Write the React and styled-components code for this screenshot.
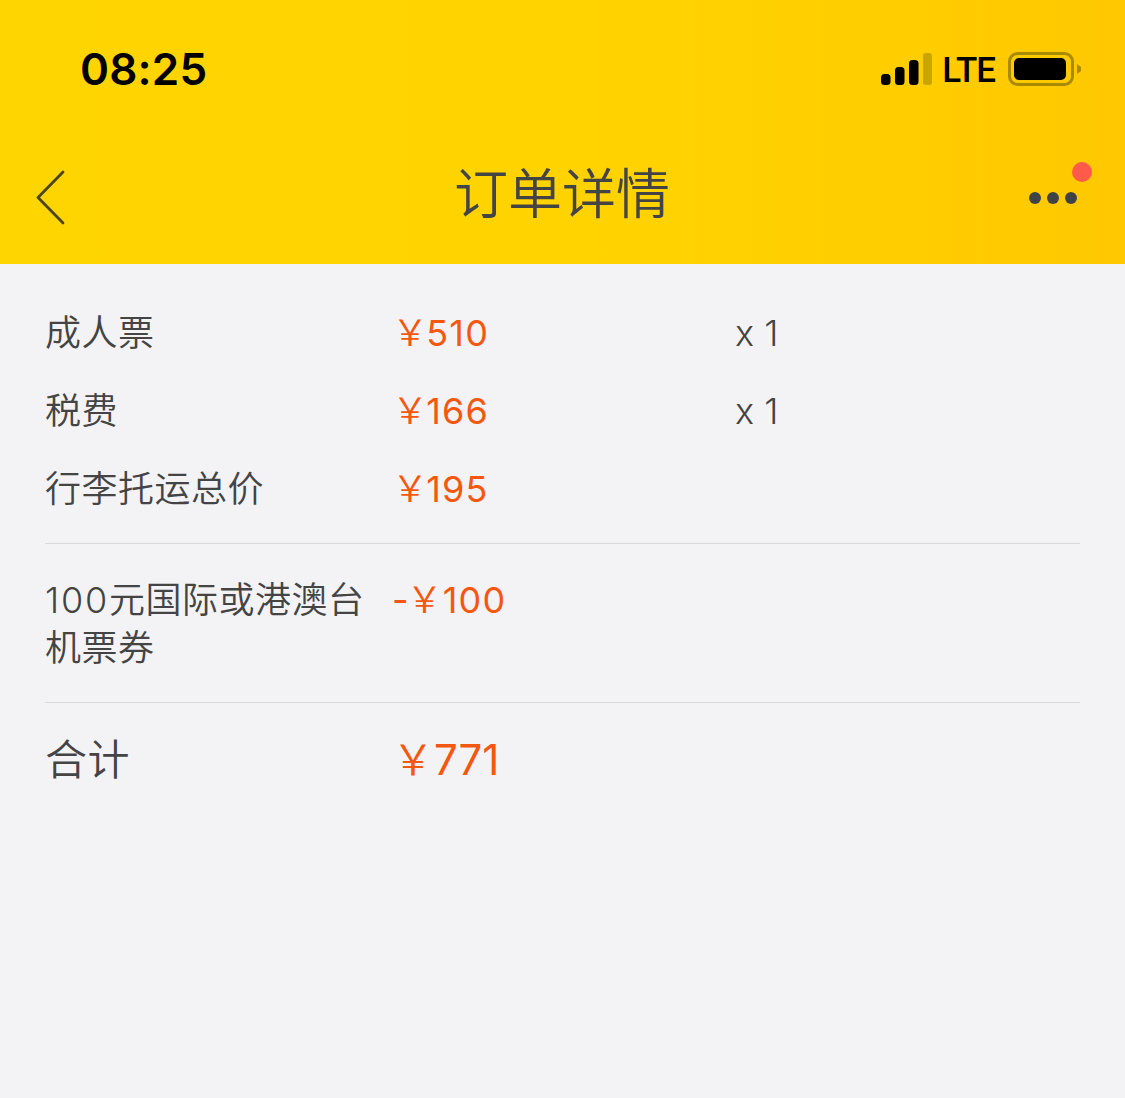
import React from "react";
import styled, { createGlobalStyle } from "styled-components";

const GlobalStyle = createGlobalStyle`
  html, body {
    margin: 0;
    padding: 0;
    background: #f3f3f5;
  }
  body {
    font-family: "Inter", "Noto Sans CJK SC", sans-serif;
  }
`;

const Page = styled.div`
  width: 1125px;
  height: 1098px;
  overflow: hidden;
  background: #f3f3f5;
`;

const Header = styled.header`
  height: 264px;
  background: linear-gradient(90deg, #ffd500 0%, #ffd200 60%, #ffc800 100%);
`;

const StatusBar = styled.div`
  height: 132px;
  padding: 6px 43px 0 80px;
  box-sizing: border-box;
  display: flex;
  align-items: center;
  justify-content: space-between;
`;

const Clock = styled.div`
  font-family: "Inter", sans-serif;
  font-size: 44px;
  font-weight: 600;
  letter-spacing: 0.2px;
  color: #000;
`;

const StatusIcons = styled.div`
  display: flex;
  align-items: center;
  gap: 11px;
`;

const Carrier = styled.span`
  font-family: "Roboto", sans-serif;
  font-size: 35px;
  font-weight: 500;
  line-height: 36px;
  letter-spacing: -1px;
  margin: 3px 2px 0 -1px;
  color: #000;
`;

const NavBar = styled.div`
  height: 132px;
  padding: 0 48px 0 36px;
  box-sizing: border-box;
  display: grid;
  grid-template-columns: 1fr auto 1fr;
  align-items: center;
`;

const Title = styled.h1`
  margin: 0 0 14px 11px;
  font-family: "Noto Sans CJK SC", sans-serif;
  font-size: 54px;
  font-weight: 350;
  line-height: 60px;
  color: #444;
`;

const MoreButton = styled.div`
  position: relative;
  justify-self: end;
  display: flex;
  gap: 6px;
`;

const Dot = styled.span`
  width: 12px;
  height: 12px;
  border-radius: 50%;
  background: #3f4347;
`;

const Badge = styled.span`
  position: absolute;
  top: -30px;
  right: -15px;
  width: 20px;
  height: 20px;
  border-radius: 50%;
  background: #ff5a4a;
`;

const Content = styled.main`
  padding: 30px 45px 0;
`;

const Section = styled.section`
  border-bottom: ${(p) => (p.$last ? "none" : "1px solid #d9d9db")};
  padding-bottom: ${(p) => p.$bottom || 0}px;
  padding-top: ${(p) => p.$top || 0}px;
`;

const Row = styled.div`
  display: grid;
  grid-template-columns: 347px 343px 1fr;
  align-items: start;
  font-family: "Inter", "Noto Sans CJK SC", sans-serif;
  font-size: ${(p) => (p.$large ? 42 : 36)}px;
  line-height: ${(p) => p.$height || 78}px;
  letter-spacing: 0.5px;
  color: #444;
`;

const Label = styled.div`
  font-weight: 350;
`;

const Digits = styled.span`
  letter-spacing: 1.8px;
`;

const Price = styled.div`
  color: #f4570f;
  font-weight: 400;
  white-space: nowrap;
  letter-spacing: ${(p) => (p.$large ? 0 : 1.2)}px;
`;

const Minus = styled.span`
  letter-spacing: -2px;
`;

const Yen = styled.span`
  font-family: "Noto Sans CJK SC", sans-serif;
  font-weight: 350;
  line-height: 0;
  margin-right: ${(p) => p.$gap}px;
`;

const Qty = styled.div`
  font-weight: 350;
  letter-spacing: 0;
`;

const items = [
  { label: "成人票", price: "510", qty: "x 1" },
  { label: "税费", price: "166", qty: "x 1" },
  { label: "行李托运总价", price: "195" },
];

export default function App() {
  return (
    <Page>
      <GlobalStyle />
      <Header>
        <StatusBar>
          <Clock>08:25</Clock>
          <StatusIcons>
            <svg width="51" height="32" viewBox="0 0 51 32">
              <rect x="0" y="21" width="9.5" height="11" rx="3.5" fill="#000" />
              <rect x="14" y="14" width="9.5" height="18" rx="3.5" fill="#000" />
              <rect x="28" y="7" width="9.5" height="25" rx="3.5" fill="#000" />
              <rect x="42" y="0" width="9" height="32" rx="3" fill="#c9a500" />
            </svg>
            <Carrier>LTE</Carrier>
            <svg width="74" height="34" viewBox="0 0 74 34">
              <rect x="1.5" y="1.5" width="63" height="31" rx="8" fill="none" stroke="#a98a00" strokeWidth="3" />
              <rect x="6" y="6" width="52" height="22" rx="5" fill="#000" />
              <path d="M69 12 L73 15 V19 L69 22 Z" fill="#a98a00" />
            </svg>
          </StatusIcons>
        </StatusBar>
        <NavBar>
          <svg width="30" height="58" viewBox="0 0 30 58">
            <path d="M27 3 L2 28.5 L27 54" fill="none" stroke="#4a4618" strokeWidth="2.8" strokeLinecap="round" strokeLinejoin="round" />
          </svg>
          <Title>订单详情</Title>
          <MoreButton>
            <Dot />
            <Dot />
            <Dot />
            <Badge />
          </MoreButton>
        </NavBar>
      </Header>
      <Content>
        <Section $bottom={15}>
          {items.map((item) => (
            <Row key={item.label}>
              <Label>{item.label}</Label>
              <Price>
                <Yen $gap={-3}>￥</Yen>
                {item.price}
              </Price>
              <Qty>{item.qty}</Qty>
            </Row>
          ))}
        </Section>
        <Section $top={32} $bottom={30}>
          <Row $height={48}>
            <Label><Digits>100</Digits>元国际或港澳台<br />机票券</Label>
            <Price>
              <Minus>-</Minus>
              <Yen $gap={-1}>￥</Yen>
              100
            </Price>
          </Row>
        </Section>
        <Section $last $top={27}>
          <Row $large $height={60}>
            <Label>合计</Label>
            <Price $large>
              <Yen $gap={0}>￥</Yen>
              771
            </Price>
          </Row>
        </Section>
      </Content>
    </Page>
  );
}
